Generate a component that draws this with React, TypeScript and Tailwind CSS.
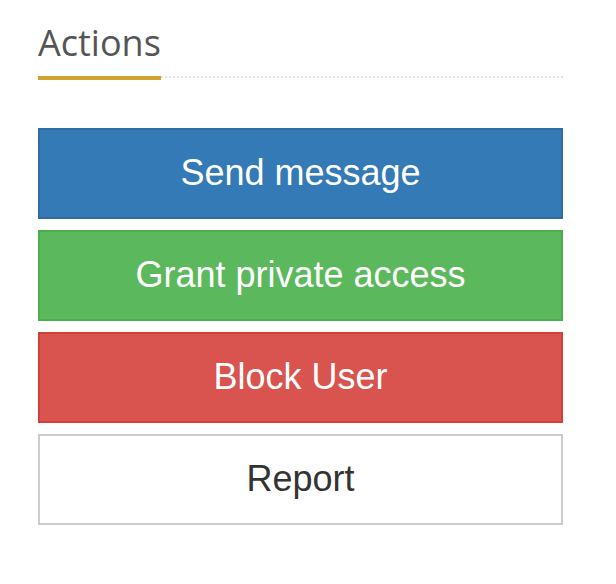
import * as React from "react";

const BUTTONS = [
  { label: "Send message", cls: "bg-[#337ab7] border-[#2e6da4] text-white" },
  { label: "Grant private access", cls: "bg-[#5cb85c] border-[#4cae4c] text-white" },
  { label: "Block User", cls: "bg-[#d9534f] border-[#d43f3a] text-white" },
  { label: "Report", cls: "bg-white border-[#cccccc] text-[#333333]" },
];

export default function App() {
  return (
    <div className="w-[616px] h-[584px] bg-white pl-[38px] pr-[53px] pt-[19px]">
      <h2 className="font-['Open_Sans',sans-serif] text-[36px] leading-[48px] text-[#555555] font-normal">
        Actions
      </h2>
      <div className="flex items-start mt-[9px]">
        <div className="w-[123px] h-[4px] bg-[#d1a230]" />
        <div className="flex-1 border-t-2 border-dotted border-[#e2e2e2]" />
      </div>
      <div className="mt-[48px] flex flex-col gap-[11px]">
        {BUTTONS.map((b) => (
          <button
            key={b.label}
            type="button"
            className={
              "h-[91px] w-full border-2 flex items-center justify-center pb-[2px] font-['Liberation_Sans',Arial,sans-serif] text-[36px] leading-none " +
              b.cls
            }
          >
            {b.label}
          </button>
        ))}
      </div>
    </div>
  );
}
